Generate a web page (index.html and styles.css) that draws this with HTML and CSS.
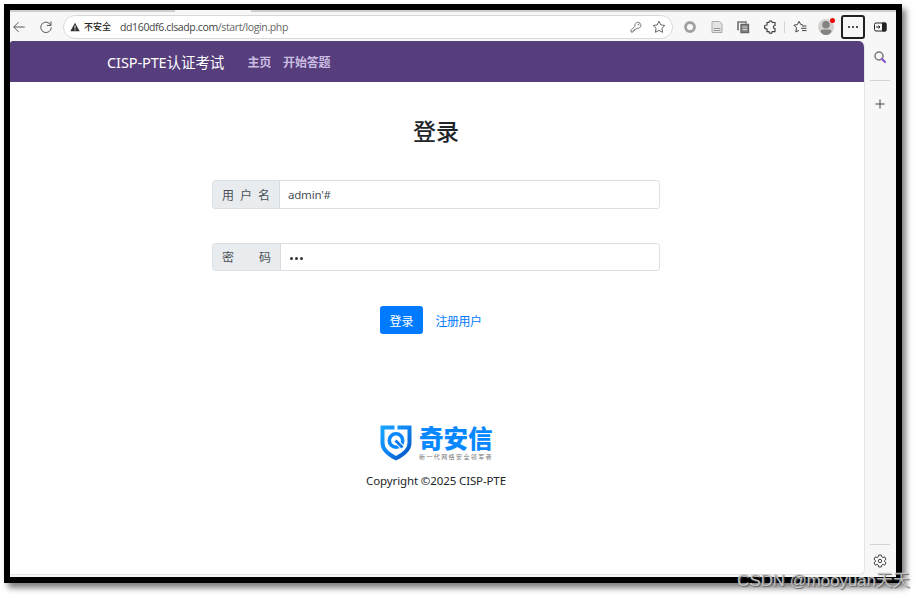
FILE: index.html
```html
<!DOCTYPE html>
<html lang="zh-CN">
<head>
  <meta charset="UTF-8">
  <meta name="viewport" content="width=device-width, initial-scale=1.0">
  <title>登录 - CISP-PTE认证考试</title>
  <link rel="stylesheet" href="styles.css">
</head>
<body>
  <div class="window">
    <div class="tab-strip"><span class="active-tab"></span></div>

    <!-- Browser toolbar -->
    <div class="toolbar">
      <svg class="icon back" viewBox="0 0 16 16"><path d="M14.500 8H2M7.500 2.500L2 8l5.500 5.500"/></svg>
      <svg class="icon reload" viewBox="0 0 16 16"><path d="M13.500 6A6 6 0 1 0 14 8.500M13.700 1.500v4.700H9"/></svg>
      <div class="address-bar">
        <svg class="warning" viewBox="0 0 10 10"><path d="M5 .8L9.700 9.300H.3z" fill="#333"/><path d="M5 3.500v3M5 7.400v1" stroke="#fff"/></svg>
        <span class="insecure">不安全</span>
        <span class="url">dd160df6.clsadp.com<i>/start/login.php</i></span>
        <svg class="icon key" viewBox="0 0 12 12"><path d="M5 5.200a3 3 0 1 1 2 2L5.800 8.300H4.500v1.300H3.200V11H1V9.200z"/><circle cx="8.500" cy="3.600" r=".4"/></svg>
        <svg class="icon star" viewBox="0 0 14 14"><path d="M7 1.200l1.800 3.700 4 .6-2.900 2.800.7 4L7 10.400l-3.600 1.900.7-4-2.900-2.800 4-.6z"/></svg>
      </div>
      <div class="extensions">
        <svg class="icon" viewBox="0 0 14 14"><circle cx="7" cy="7" r="4.500" stroke="#a0a0a0" stroke-width="2.800"/></svg>
        <svg class="icon" viewBox="0 0 14 14"><path d="M2 1.500h7.500l2.500 2.500v8.500H2z" fill="#e4e4e4" stroke="#aaa"/><path d="M3.500 8.500h7M3.500 10.500h7" stroke="#999"/></svg>
        <svg class="icon" viewBox="0 0 14 14"><path d="M3 9.500H2V2h8v1.500" stroke="#777" stroke-width="1.700"/><path d="M5 4.500h7.500v8H5z" fill="#888" stroke="#666" stroke-width="1.400"/><path d="M6.500 7h4.500M6.500 9.500h4.500" stroke="#ddd" stroke-width=".9"/></svg>
        <svg class="icon" viewBox="0 0 14 14"><path d="M4 2.500h2a1.600 1.600 0 0 1 3.200 0H12v3a1.600 1.600 0 1 0 0 3.200v3H9.200a1.600 1.600 0 0 1-3.200 0H4V9Q1.500 9 1.500 7T4 5z" stroke-width="1.200"/></svg>
      </div>
      <span class="separator"></span>
      <svg class="icon favorites" viewBox="0 0 14 14"><path d="M9.800 4.900L7.800 4.600 6 1.300 4.400 4.600.9 5.200l2.600 2.600-.7 4.200L6 10.300M9 6h4.500M8 8.300h5.500M9 10.600h4.500"/></svg>
      <div class="avatar">
        <svg viewBox="0 0 16 16"><circle cx="8" cy="8" r="8" fill="#d3d0ce"/><circle cx="8" cy="5.800" r="3.800" fill="#85817f"/><path d="M2.500 12.500q0-2 2.500-2h6q2.500 0 2.500 2-2 3.500-5.500 3.500t-5.500-3.500z" fill="#85817f"/></svg>
        <span class="badge"></span>
      </div>
      <div class="more"><svg viewBox="0 0 12 4"><circle cx="2" cy="2" r=".9"/><circle cx="6" cy="2" r=".9"/><circle cx="10" cy="2" r=".9"/></svg></div>
      <svg class="icon side-toggle" viewBox="0 0 14 14"><rect x="1.500" y="3" width="11.500" height="8" rx="1.500"/><path d="M9.500 3H13v8H9.500z" fill="#222"/><path d="M3 7h4M5.500 5.500L7 7 5.500 8.500"/></svg>
    </div>

    <div class="workspace">
      <div class="page">
        <nav class="navbar">
          <a class="brand">CISP-PTE认证考试</a>
          <a class="nav-link">主页</a>
          <a class="nav-link">开始答题</a>
        </nav>

        <main class="login">
          <h2>登录</h2>
          <div class="input-group">
            <label class="label-user"><span>用</span><span>户</span><span>名</span></label>
            <div class="field">admin'#</div>
          </div>
          <div class="input-group password">
            <label class="label-pass"><span>密</span><span>码</span></label>
            <div class="field"><span class="dot"></span><span class="dot"></span><span class="dot"></span></div>
          </div>
          <div class="actions">
            <button class="btn">登录</button>
            <a class="register">注册用户</a>
          </div>
        </main>

        <footer>
          <div class="logo">
            <svg viewBox="0 0 32 36">
              <defs>
                <linearGradient id="shield" x1="0" y1="0" x2="1" y2="1"><stop offset="0" stop-color="#18a4ff"/><stop offset=".5" stop-color="#0d83f3"/><stop offset="1" stop-color="#0750bd"/></linearGradient>
              </defs>
              <path d="M14.500 2.500H2.500V18q0 8.500 13.500 15.300Q29.500 26.500 29.500 18V2.500H17.500" fill="none" stroke="url(#shield)" stroke-width="4"/>
              <circle cx="16" cy="15.500" r="6.700" fill="none" stroke="#0988ff" stroke-width="3.600"/>
              <path d="M14.500 14.500l8 8" stroke="#fff" stroke-width="4.800"/>
              <path d="M15.500 15.500l7 7" stroke="#0978f0" stroke-width="2.800"/>
            </svg>
            <div class="logo-text">
              <strong>奇安信</strong>
              <small>新一代网络安全领军者</small>
            </div>
          </div>
          <p>Copyright ©2025 CISP-PTE</p>
        </footer>
      </div>

      <aside class="sidebar">
        <svg class="icon search" viewBox="0 0 14 14"><circle cx="6" cy="6" r="4" stroke="#777" stroke-width="1.500"/><path d="M9 9l3 3" stroke="#8655c9" stroke-width="2.200" stroke-linecap="round"/></svg>
        <hr>
        <svg class="icon plus" viewBox="0 0 10 10"><path d="M5 .5v9M.5 5h9"/></svg>
        <hr class="bottom-rule">
        <svg class="icon settings" viewBox="0 0 14 14"><path d="M5.700 1h2.600l.4 1.800 1.200.7 1.800-.6L13 5.200l-1.400 1.200v1.200L13 8.800l-1.300 2.300-1.800-.6-1.200.7-.4 1.800H5.700l-.4-1.800-1.200-.7-1.800.6L1 8.800l1.400-1.200V6.400L1 5.200l1.300-2.300 1.800.6 1.200-.7z"/><circle cx="7" cy="7" r="1.700"/></svg>
      </aside>
    </div>
  </div>
  <div class="watermark">CSDN @mooyuan天天</div>
</body>
</html>
```

FILE: styles.css
```css
* {
  box-sizing: border-box;
}

body {
  margin: 0;
  padding: 4px;
  height: 596px;
  overflow: hidden;
  background: #fff;
  color: #212529;
  font-family: "Noto Sans", "Noto Sans CJK SC", sans-serif;
  font-size: 12px;
}

.window {
  display: flex;
  flex-direction: column;
  width: 898px;
  height: 579px;
  border: 6px solid #000;
  background: #f7f7f7;
  box-shadow: 4px 5px 6px rgba(0, 0, 0, 0.5);
}

.tab-strip {
  height: 2px;
  flex: none;
  background: #cecece;
}

.active-tab {
  display: block;
  width: 76px;
  height: 2px;
  margin-left: 165px;
  background: #f7f7f7;
}

.icon {
  flex: none;
  width: 14px;
  height: 14px;
  fill: none;
  stroke: #444;
  stroke-width: 1;
}

/* Toolbar */
.toolbar {
  display: flex;
  align-items: center;
  height: 29px;
  flex: none;
}

.back {
  margin-left: 2px;
}

.reload {
  margin-left: 13px;
}

.address-bar {
  display: flex;
  align-items: center;
  width: 610px;
  height: 24px;
  margin-left: 10px;
  padding: 0 6px;
  border: 1px solid #d9d9d9;
  border-radius: 12px;
  background: #fff;
}

.warning {
  width: 10px;
  height: 10px;
}

.insecure {
  margin-left: 4px;
  color: #222;
  font-size: 9px;
  font-weight: 500;
}

.url {
  margin-left: 9px;
  color: #444;
  font-family: "Open Sans", sans-serif;
  font-size: 10.500px;
  letter-spacing: -0.370px;
  white-space: nowrap;
}

.url i {
  font-style: normal;
  color: #666;
}

.key {
  width: 12px;
  height: 12px;
  margin-left: auto;
  stroke: #777;
}

.star {
  margin-left: 10px;
  stroke: #666;
}

.extensions {
  display: flex;
  gap: 12.500px;
  margin-left: 10px;
}

.separator {
  width: 1px;
  height: 12px;
  margin-left: 7px;
  background: #d5d5d5;
}

.favorites {
  margin-left: 8px;
}

.avatar {
  position: relative;
  width: 16px;
  height: 16px;
  margin-left: 11px;
}

.avatar svg {
  display: block;
}

.badge {
  position: absolute;
  top: -1px;
  right: -1px;
  width: 5px;
  height: 5px;
  border-radius: 50%;
  background: #f00000;
}

.more {
  display: flex;
  align-items: center;
  justify-content: center;
  width: 24px;
  height: 24px;
  margin-left: 7px;
  border: 2px solid #202020;
  border-radius: 3px;
}

.more svg {
  width: 12px;
  height: 4px;
}

.side-toggle {
  margin-left: 8px;
  stroke: #222;
}

.workspace {
  display: flex;
  flex: 1;
  min-height: 0;
}

.page {
  width: 855px;
  height: 534px;
  overflow: hidden;
  border-right: 1px solid #e5e5e5;
  border-bottom: 1px solid #e5e5e5;
  border-radius: 3px 6px 6px 0;
  background: #fff;
}

/* Site navigation */
.navbar {
  display: flex;
  align-items: center;
  height: 41px;
  padding-left: 97px;
  background: #563d7c;
}

.brand {
  width: 117px;
  color: #fff;
  font-size: 14.500px;
  letter-spacing: -0.1px;
  line-height: 18px;
  white-space: nowrap;
}

.nav-link {
  margin-left: 12px;
  color: #cbbde2;
  font-weight: 700;
  letter-spacing: -0.2px;
}

.brand + .nav-link {
  margin-left: 23.500px;
}

/* Login form */
.login {
  width: 448px;
  margin: 0 auto 0 202px;
  padding-top: 32px;
}

h2 {
  margin: 0 0 32px;
  font-size: 23px;
  font-weight: 500;
  line-height: 34px;
  text-align: center;
}

.input-group {
  display: flex;
  height: 29px;
  border: 1px solid #dce1e5;
  border-radius: 3px;
  color: #495057;
}

.password {
  height: 28px;
  margin-top: 34px;
}

.input-group label {
  display: flex;
  align-items: center;
  justify-content: space-between;
  width: 67px;
  padding: 0 9px;
  border-right: 1px solid #d5dbe0;
  background: #e9ecef;
}

.input-group .label-pass {
  width: 68px;
}

.field {
  display: flex;
  align-items: center;
  flex: 1;
  padding-left: 8px;
  font-size: 11.500px;
  letter-spacing: -0.2px;
}

.dot {
  width: 3px;
  height: 3px;
  margin: 2px 1px 0;
  border-radius: 50%;
  background: #333;
}

.actions {
  display: flex;
  align-items: center;
  margin-top: 35px;
  padding-left: 168px;
}

.btn {
  width: 43px;
  height: 28px;
  padding: 1px 0 0;
  border: 0;
  border-radius: 3px;
  background: #007bff;
  color: #fff;
  font: inherit;
}

.register {
  margin-left: 12.500px;
  padding-top: 1px;
  color: #007bff;
  letter-spacing: -0.5px;
}

footer {
  width: 448px;
  margin: 91px 0 0 202px;
}

.logo {
  display: flex;
  height: 38px;
  padding-left: 168px;
}

.logo > svg {
  width: 32px;
  height: 36px;
}

.logo-text {
  margin-left: 7px;
  white-space: nowrap;
}

.logo-text strong {
  display: block;
  color: #0788ff;
  font-size: 24.500px;
  font-weight: 900;
  line-height: 28px;
}

.logo-text small {
  display: block;
  color: #777;
  font-size: 6px;
  letter-spacing: 1.400px;
  line-height: 8px;
}

footer p {
  margin: 10px 0 0;
  font-size: 11.500px;
  letter-spacing: -0.120px;
  line-height: 16px;
  text-align: center;
}

/* Browser side panel */
.sidebar {
  display: flex;
  flex-direction: column;
  align-items: center;
  flex: 1;
  padding-right: 2px;
}

.search {
  margin-top: 9px;
}

.sidebar hr {
  width: 20px;
  margin: 16px 0 18px;
  border: 0;
  border-top: 1px solid #d4d4d4;
}

.plus {
  width: 10px;
  height: 10px;
}

.sidebar .bottom-rule {
  margin: auto 0 9px;
}

.settings {
  margin-bottom: 9px;
}

.watermark {
  position: absolute;
  top: 569px;
  left: 737px;
  color: rgba(205, 205, 205, 0.9);
  font-family: "Liberation Sans", "Noto Sans CJK SC", sans-serif;
  font-size: 17px;
  letter-spacing: -0.1px;
  line-height: 24px;
  text-shadow: 1px 1px 1px #666;
  white-space: nowrap;
}
```
